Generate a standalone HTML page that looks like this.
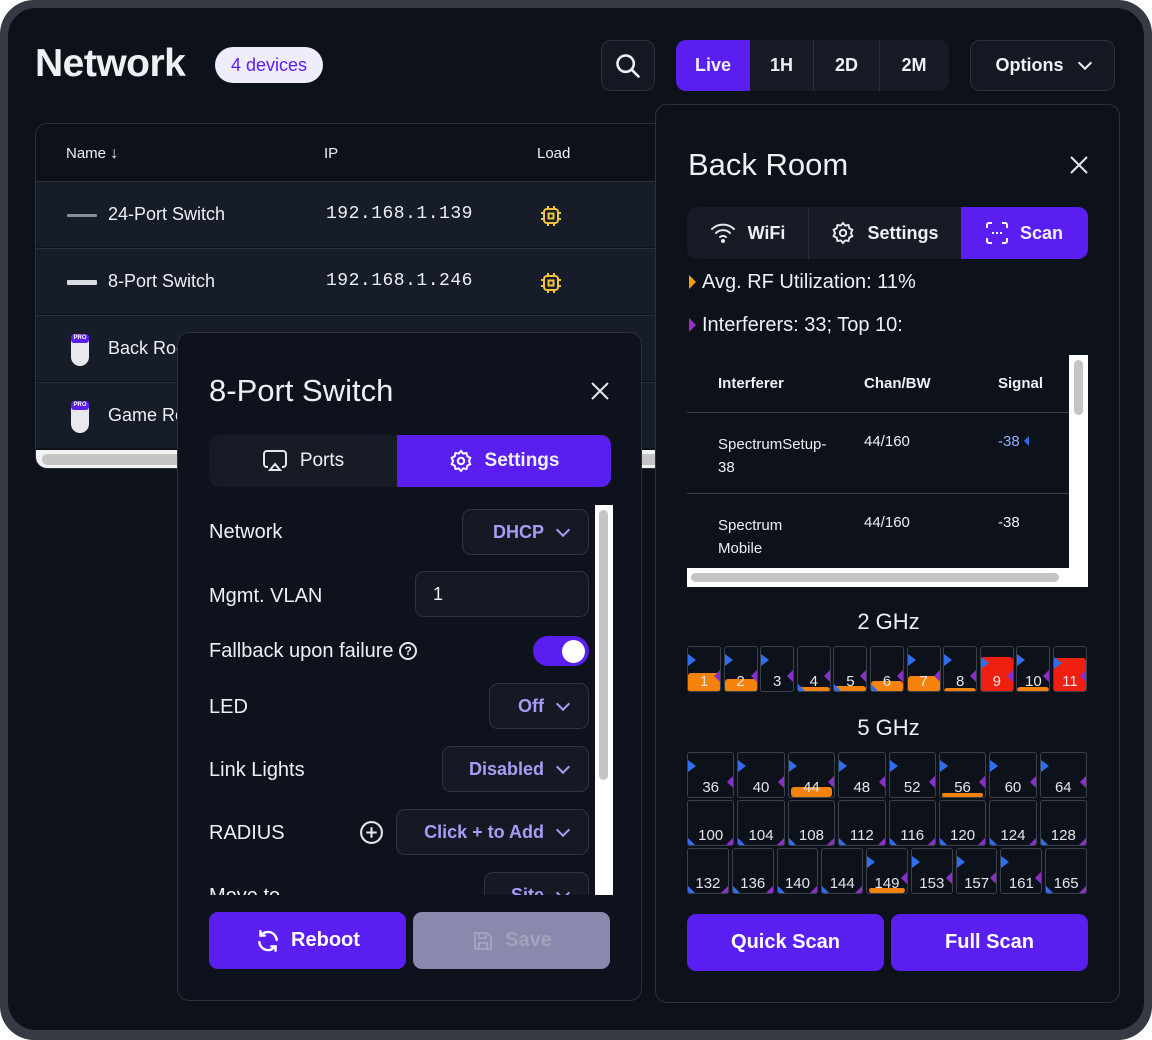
<!DOCTYPE html>
<html><head><meta charset="utf-8">
<style>
*{box-sizing:border-box;margin:0;padding:0}
body{width:1152px;height:1040px;background:#fff;font-family:"Liberation Sans",sans-serif;color:#eef0f4;position:relative;overflow:hidden}
.frame{position:absolute;left:0;top:0;width:1152px;height:1040px;border-radius:34px;background:#363a42}
.inner{position:absolute;left:8px;top:8px;width:1136px;height:1022px;border-radius:28px;background:#0d111a;overflow:hidden}
.a{position:absolute}
.btn{position:absolute;border:1px solid #2c313c;border-radius:10px;background:#131822;display:flex;align-items:center;justify-content:center;font-size:18px;color:#eef0f4}
.row{position:absolute;left:0;width:640px;height:66px;background:#161c28;border-top:1px solid #2a303b}
.row .nm{position:absolute;left:72px;top:22px;font-size:18px}
.row .ip{position:absolute;left:290px;top:22px;font-size:18px;font-family:"Liberation Mono",monospace;letter-spacing:0.5px}
.panel{position:absolute;background:#0e121c;border:1px solid #2c313c;border-radius:12px}
.lbl{position:absolute;left:31px;font-size:20px;color:#eef0f4}
.sel{position:absolute;border:1px solid #2e3440;border-radius:9px;background:#141924;color:#a99cf5;font-size:18px;font-weight:bold;display:flex;align-items:center;justify-content:flex-end;padding-right:20px;gap:14px}
.chev{width:10px;height:10px;border-right:2px solid #a99cf5;border-bottom:2px solid #a99cf5;transform:rotate(45deg);margin-top:-5px}
.grid{position:absolute;display:flex}
.c{position:relative;border:1px solid #3a404c;border-radius:3px;background:#0d111a;overflow:hidden;height:46px}
.c .f{position:absolute;left:0;right:0;bottom:0;border-radius:3px 3px 0 0}
.c .bt{position:absolute;left:0;top:7px;width:0;height:0;border-left:8px solid #2f6fee;border-top:6px solid transparent;border-bottom:6px solid transparent}
.c .bb{position:absolute;left:0;bottom:0;width:0;height:0;border-left:7px solid #2f6fee;border-top:7px solid transparent}
.c .pt{position:absolute;right:0;bottom:9px;width:0;height:0;border-right:6px solid #8b2fc9;border-top:6px solid transparent;border-bottom:6px solid transparent}
.c .pb{position:absolute;right:0;bottom:0;width:0;height:0;border-right:7px solid #8b2fc9;border-top:7px solid transparent}
.c .n{position:absolute;left:0;right:0;bottom:1px;text-align:center;font-size:15px;color:#e4e6ec}
.o{background:#f5820a}.r{background:#f02010}
.pbtn{position:absolute;background:#5a1ff0;border-radius:9px;display:flex;align-items:center;justify-content:center;font-size:20px;font-weight:bold;color:#fff;gap:10px}
</style></head><body>
<div class="frame"></div>
<div class="inner">
<!-- header -->
<div class="a" style="left:27px;top:34px;font-size:39px;font-weight:bold;letter-spacing:-0.5px">Network</div>
<div class="a" style="left:207px;top:39px;width:108px;height:36px;border-radius:18px;background:#efecfb;color:#5a1ff0;font-size:18px;display:flex;align-items:center;justify-content:center">4 devices</div>
<div class="btn" style="left:593px;top:32px;width:54px;height:51px"><svg width="28" height="28" viewBox="0 0 24 24" fill="none" stroke="#eef0f4" stroke-width="2.2" stroke-linecap="round"><circle cx="10" cy="10" r="7"/><path d="M15.5 15.5L21 21"/></svg></div>
<div class="a" style="left:668px;top:32px;width:273px;height:51px;border-radius:10px;background:#161b26;overflow:hidden;display:flex;font-size:18px;font-weight:bold">
<div style="width:74px;background:#5a1ff0;display:flex;align-items:center;justify-content:center">Live</div>
<div style="width:64px;border-right:1px solid #2a2f3a;display:flex;align-items:center;justify-content:center">1H</div>
<div style="width:66px;border-right:1px solid #2a2f3a;display:flex;align-items:center;justify-content:center">2D</div>
<div style="width:68px;display:flex;align-items:center;justify-content:center">2M</div>
</div>
<div class="btn" style="left:962px;top:32px;width:145px;height:51px;font-weight:bold;gap:16px">Options <div class="chev" style="border-color:#eef0f4"></div></div>

<!-- table card -->
<div class="a" style="left:27px;top:115px;width:660px;height:346px;border:1px solid #2a303b;border-radius:12px;background:#0d111a;overflow:hidden">
<div class="a" style="left:30px;top:21px;font-size:15px">Name <span style="font-size:16px">&#8595;</span></div>
<div class="a" style="left:288px;top:21px;font-size:15px">IP</div>
<div class="a" style="left:501px;top:21px;font-size:15px">Load</div>
<div class="row" style="top:57px"><div class="a" style="left:31px;top:32px;width:30px;height:3px;background:#8a8f98;border-radius:1px"></div><div class="nm">24-Port Switch</div><div class="ip">192.168.1.139</div>
<svg class="a" style="left:503px;top:22px" width="24" height="24" viewBox="0 0 24 24" fill="none" stroke="#f2c43d" stroke-width="2"><rect x="5" y="5" width="14" height="14" rx="3"/><rect x="9.5" y="9.5" width="5" height="5"/><path d="M9 2v3M15 2v3M9 19v3M15 19v3M2 9h3M2 15h3M19 9h3M19 15h3"/></svg></div>
<div class="row" style="top:124px"><div class="a" style="left:31px;top:31px;width:30px;height:5px;background:#d8dbe0;border-radius:1px"></div><div class="nm">8-Port Switch</div><div class="ip">192.168.1.246</div>
<svg class="a" style="left:503px;top:22px" width="24" height="24" viewBox="0 0 24 24" fill="none" stroke="#f2c43d" stroke-width="2"><rect x="5" y="5" width="14" height="14" rx="3"/><rect x="9.5" y="9.5" width="5" height="5"/><path d="M9 2v3M15 2v3M9 19v3M15 19v3M2 9h3M2 15h3M19 9h3M19 15h3"/></svg></div>
<div class="row" style="top:191px"><div class="a" style="left:35px;top:20px;width:18px;height:30px;background:#e8e9ee;border-radius:4px 4px 9px 9px"></div><div class="a" style="left:35px;top:18px;width:18px;height:9px;background:#5a1ff0;border-radius:3px;font-size:6px;color:#fff;text-align:center;line-height:9px;font-weight:bold">PRO</div><div class="nm">Back Room</div></div>
<div class="row" style="top:258px"><div class="a" style="left:35px;top:20px;width:18px;height:30px;background:#e8e9ee;border-radius:4px 4px 9px 9px"></div><div class="a" style="left:35px;top:18px;width:18px;height:9px;background:#5a1ff0;border-radius:3px;font-size:6px;color:#fff;text-align:center;line-height:9px;font-weight:bold">PRO</div><div class="nm">Game Room</div></div>
<div class="a" style="left:0;top:326px;width:660px;height:20px;background:#f2f2f2"><div class="a" style="left:6px;top:4px;width:640px;height:11px;border-radius:6px;background:#c4c4c4"></div></div>
</div>

<!-- left modal -->
<div class="panel" style="left:169px;top:324px;width:465px;height:669px">
<div class="a" style="left:31px;top:40px;font-size:31px">8-Port Switch</div>
<svg class="a" style="left:412px;top:48px" width="20" height="20" viewBox="0 0 20 20" stroke="#e4e6ec" stroke-width="2"><path d="M2 2L18 18M18 2L2 18"/></svg>
<div class="a" style="left:31px;top:102px;width:402px;height:52px;border-radius:10px;background:#161b26;overflow:hidden;display:flex;font-size:19px">
<div style="width:188px;display:flex;align-items:center;justify-content:center;gap:12px"><svg width="26" height="24" viewBox="0 0 26 24" fill="none" stroke="#e4e6ec" stroke-width="2"><path d="M6 18H5a3 3 0 0 1-3-3V5a3 3 0 0 1 3-3h16a3 3 0 0 1 3 3v10a3 3 0 0 1-3 3h-1"/><path d="M13 15l5 6H8z"/></svg>Ports</div>
<div style="flex:1;background:#5a1ff0;display:flex;align-items:center;justify-content:center;gap:12px;font-weight:bold"><svg width="24" height="24" viewBox="0 0 24 24" fill="none" stroke="#fff" stroke-width="2"><path d="M12 2l2.2 2.6 3.3-.6.8 3.3 3 1.5-1.3 3.2 1.3 3.2-3 1.5-.8 3.3-3.3-.6L12 22l-2.2-2.6-3.3.6-.8-3.3-3-1.5 1.3-3.2L2.7 8.8l3-1.5.8-3.3 3.3.6z"/><circle cx="12" cy="12" r="3.2"/></svg>Settings</div>
</div>
<div class="a" style="left:0;top:172px;width:440px;height:390px;overflow:hidden">
<div class="lbl" style="top:16px">Network</div>
<div class="sel" style="left:284px;top:4px;width:127px;height:46px">DHCP <div class="chev"></div></div>
<div class="lbl" style="top:80px">Mgmt. VLAN</div>
<div class="a" style="left:237px;top:66px;width:174px;height:46px;border:1px solid #2e3440;border-radius:9px;background:#141924;font-size:18px;padding:12px 0 0 17px">1</div>
<div class="lbl" style="top:135px">Fallback upon failure <span style="display:inline-block;width:18px;height:18px;border:2px solid #e4e6ec;border-radius:50%;font-size:12px;text-align:center;line-height:14px;font-weight:bold;vertical-align:2px">?</span></div>
<div class="a" style="left:355px;top:131px;width:56px;height:30px;border-radius:15px;background:#5a1ff0"><div class="a" style="left:29px;top:4px;width:23px;height:23px;border-radius:50%;background:#fff"></div></div>
<div class="lbl" style="top:191px">LED</div>
<div class="sel" style="left:311px;top:178px;width:100px;height:46px">Off <div class="chev"></div></div>
<div class="lbl" style="top:254px">Link Lights</div>
<div class="sel" style="left:264px;top:241px;width:147px;height:46px">Disabled <div class="chev"></div></div>
<div class="lbl" style="top:317px">RADIUS</div>
<svg class="a" style="left:181px;top:315px" width="25" height="25" viewBox="0 0 24 24" fill="none" stroke="#e4e6ec" stroke-width="2"><circle cx="12" cy="12" r="10"/><path d="M12 7v10M7 12h10"/></svg>
<div class="sel" style="left:218px;top:304px;width:193px;height:46px">Click + to Add <div class="chev"></div></div>
<div class="lbl" style="top:380px">Move to</div>
<div class="sel" style="left:306px;top:367px;width:105px;height:46px">Site <div class="chev"></div></div>
<div class="a" style="left:417px;top:0;width:18px;height:390px;background:#fff"><div class="a" style="left:4px;top:5px;width:9px;height:270px;border-radius:5px;background:#c4c4c4"></div></div>
</div>
<div class="pbtn" style="left:31px;top:579px;width:197px;height:57px"><svg width="26" height="26" viewBox="0 0 24 24" fill="none" stroke="#fff" stroke-width="2.2" stroke-linecap="round"><path d="M20 11a8 8 0 0 0-14.5-4M4 13a8 8 0 0 0 14.5 4"/><path d="M5 3v4h4M19 21v-4h-4"/></svg>Reboot</div>
<div class="pbtn" style="left:235px;top:579px;width:197px;height:57px;background:#8a88ac;color:#a3a2bd"><svg width="24" height="24" viewBox="0 0 24 24" fill="none" stroke="#a3a2bd" stroke-width="2"><path d="M4 4h12l4 4v12H4z"/><path d="M8 4v5h7V4M8 20v-6h8v6"/></svg>Save</div>
</div>

<!-- right panel -->
<div class="panel" style="left:647px;top:96px;width:465px;height:899px;background:#0d111a">
<div class="a" style="left:32px;top:42px;font-size:31px">Back Room</div>
<svg class="a" style="left:413px;top:50px" width="20" height="20" viewBox="0 0 20 20" stroke="#e4e6ec" stroke-width="2"><path d="M2 2L18 18M18 2L2 18"/></svg>
<div class="a" style="left:31px;top:102px;width:401px;height:52px;border-radius:10px;background:#161b26;overflow:hidden;display:flex;font-size:18px;font-weight:bold">
<div style="width:122px;border-right:1px solid #2a2f3a;display:flex;align-items:center;justify-content:center;gap:12px"><svg width="26" height="22" viewBox="0 0 26 22" fill="none" stroke="#e4e6ec" stroke-width="2" stroke-linecap="round"><path d="M2 7a16 16 0 0 1 22 0M6 11a10 10 0 0 1 14 0M10 15a4.5 4.5 0 0 1 6 0"/><circle cx="13" cy="19" r="1" fill="#e4e6ec"/></svg>WiFi</div>
<div style="width:152px;display:flex;align-items:center;justify-content:center;gap:12px"><svg width="24" height="24" viewBox="0 0 24 24" fill="none" stroke="#e4e6ec" stroke-width="2"><path d="M12 2l2.2 2.6 3.3-.6.8 3.3 3 1.5-1.3 3.2 1.3 3.2-3 1.5-.8 3.3-3.3-.6L12 22l-2.2-2.6-3.3.6-.8-3.3-3-1.5 1.3-3.2L2.7 8.8l3-1.5.8-3.3 3.3.6z"/><circle cx="12" cy="12" r="3.2"/></svg>Settings</div>
<div style="flex:1;background:#5a1ff0;display:flex;align-items:center;justify-content:center;gap:12px"><svg width="22" height="22" viewBox="0 0 22 22" fill="none" stroke="#fff" stroke-width="2"><path d="M1 6V3a2 2 0 0 1 2-2h3M16 1h3a2 2 0 0 1 2 2v3M21 16v3a2 2 0 0 1-2 2h-3M6 21H3a2 2 0 0 1-2-2v-3"/><path d="M6 11h10" stroke-dasharray="2 2"/></svg>Scan</div>
</div>
<div class="a" style="left:33px;top:170px;width:0;height:0;border-left:7px solid #f5a00a;border-top:7px solid transparent;border-bottom:7px solid transparent"></div>
<div class="a" style="left:46px;top:166px;font-size:20px">Avg. RF Utilization: 11%</div>
<div class="a" style="left:33px;top:213px;width:0;height:0;border-left:7px solid #9b2fc9;border-top:7px solid transparent;border-bottom:7px solid transparent"></div>
<div class="a" style="left:46px;top:209px;font-size:20px">Interferers: 33; Top 10:</div>
<div class="a" style="left:31px;top:250px;width:401px;height:232px;overflow:hidden;font-size:15px">
<div class="a" style="left:31px;top:20px;font-weight:bold">Interferer</div>
<div class="a" style="left:177px;top:20px;font-weight:bold">Chan/BW</div>
<div class="a" style="left:311px;top:20px;font-weight:bold">Signal</div>
<div class="a" style="left:0;top:57px;width:382px;height:1px;background:#3a404c"></div>
<div class="a" style="left:31px;top:78px;line-height:23px">SpectrumSetup-<br>38</div>
<div class="a" style="left:177px;top:78px">44/160</div>
<div class="a" style="left:311px;top:78px;color:#8fb0ff">-38 <span style="display:inline-block;width:0;height:0;border-right:5px solid #2f6fee;border-top:5px solid transparent;border-bottom:5px solid transparent"></span></div>
<div class="a" style="left:0;top:138px;width:382px;height:1px;background:#3a404c"></div>
<div class="a" style="left:31px;top:159px;line-height:23px">Spectrum<br>Mobile</div>
<div class="a" style="left:177px;top:159px">44/160</div>
<div class="a" style="left:311px;top:159px">-38</div>
<div class="a" style="left:382px;top:0;width:19px;height:232px;background:#fff"><div class="a" style="left:5px;top:5px;width:9px;height:55px;border-radius:5px;background:#c4c4c4"></div></div>
<div class="a" style="left:0;top:213px;width:382px;height:19px;background:#fff"><div class="a" style="left:4px;top:5px;width:368px;height:9px;border-radius:5px;background:#c4c4c4"></div></div>
</div>
<div class="a" style="left:0;top:504px;width:465px;text-align:center;font-size:22px">2 GHz</div>
<div class="grid" style="left:31px;top:541px;width:400px;gap:2.6px">
<div class="c" style="width:34px"><div class="f o" style="height:18px"></div><div class="bt"></div><div class="pt"></div><div class="n">1</div></div>
<div class="c" style="width:34px"><div class="f o" style="height:12px"></div><div class="bt"></div><div class="pt"></div><div class="n">2</div></div>
<div class="c" style="width:34px"><div class="bt"></div><div class="pt"></div><div class="n">3</div></div>
<div class="c" style="width:34px"><div class="f o" style="height:4px"></div><div class="bb"></div><div class="pt"></div><div class="n">4</div></div>
<div class="c" style="width:34px"><div class="f o" style="height:5px"></div><div class="bb"></div><div class="pt"></div><div class="n">5</div></div>
<div class="c" style="width:34px"><div class="f o" style="height:10px"></div><div class="bb"></div><div class="pt"></div><div class="n">6</div></div>
<div class="c" style="width:34px"><div class="f o" style="height:15px"></div><div class="bt"></div><div class="pt"></div><div class="n">7</div></div>
<div class="c" style="width:34px"><div class="f o" style="height:3px"></div><div class="bt"></div><div class="pt"></div><div class="n">8</div></div>
<div class="c" style="width:34px"><div class="f r" style="height:34px"></div><div class="bt" style="top:10px"></div><div class="pt"></div><div class="n">9</div></div>
<div class="c" style="width:34px"><div class="f o" style="height:4px"></div><div class="bt"></div><div class="pt"></div><div class="n">10</div></div>
<div class="c" style="width:34px"><div class="f r" style="height:33px"></div><div class="bt" style="top:10px"></div><div class="pt"></div><div class="n">11</div></div>
</div>
<div class="a" style="left:0;top:610px;width:465px;text-align:center;font-size:22px">5 GHz</div>
<div class="grid" style="left:31px;top:647px;width:400px;gap:3px">
<div class="c" style="width:47.4px"><div class="bt"></div><div class="pt"></div><div class="n">36</div></div>
<div class="c" style="width:47.4px"><div class="bt"></div><div class="pt"></div><div class="n">40</div></div>
<div class="c" style="width:47.4px"><div class="f o" style="height:10px;left:2px;right:2px;border-radius:3px"></div><div class="bt"></div><div class="pt"></div><div class="n">44</div></div>
<div class="c" style="width:47.4px"><div class="bt"></div><div class="pt"></div><div class="n">48</div></div>
<div class="c" style="width:47.4px"><div class="bt"></div><div class="pt"></div><div class="n">52</div></div>
<div class="c" style="width:47.4px"><div class="f o" style="height:4px;left:2px;right:2px;border-radius:3px"></div><div class="bt"></div><div class="pt"></div><div class="n">56</div></div>
<div class="c" style="width:47.4px"><div class="bt"></div><div class="pt"></div><div class="n">60</div></div>
<div class="c" style="width:47.4px"><div class="bt"></div><div class="pt"></div><div class="n">64</div></div>
</div>
<div class="grid" style="left:31px;top:695px;width:400px;gap:3px">
<div class="c" style="width:47.4px"><div class="bb"></div><div class="pb"></div><div class="n">100</div></div>
<div class="c" style="width:47.4px"><div class="bb"></div><div class="pb"></div><div class="n">104</div></div>
<div class="c" style="width:47.4px"><div class="bb"></div><div class="pb"></div><div class="n">108</div></div>
<div class="c" style="width:47.4px"><div class="bb"></div><div class="pb"></div><div class="n">112</div></div>
<div class="c" style="width:47.4px"><div class="bb"></div><div class="pb"></div><div class="n">116</div></div>
<div class="c" style="width:47.4px"><div class="bb"></div><div class="pb"></div><div class="n">120</div></div>
<div class="c" style="width:47.4px"><div class="bb"></div><div class="pb"></div><div class="n">124</div></div>
<div class="c" style="width:47.4px"><div class="bb"></div><div class="pb"></div><div class="n">128</div></div>
</div>
<div class="grid" style="left:31px;top:743px;width:400px;gap:3px">
<div class="c" style="width:41.8px"><div class="bb"></div><div class="pb"></div><div class="n">132</div></div>
<div class="c" style="width:41.8px"><div class="bb"></div><div class="pb"></div><div class="n">136</div></div>
<div class="c" style="width:41.8px"><div class="bb"></div><div class="pb"></div><div class="n">140</div></div>
<div class="c" style="width:41.8px"><div class="bb"></div><div class="pb"></div><div class="n">144</div></div>
<div class="c" style="width:41.8px"><div class="f o" style="height:5px;left:2px;right:2px;border-radius:3px"></div><div class="bt"></div><div class="pt"></div><div class="n">149</div></div>
<div class="c" style="width:41.8px"><div class="bt"></div><div class="pt"></div><div class="n">153</div></div>
<div class="c" style="width:41.8px"><div class="bt"></div><div class="pt"></div><div class="n">157</div></div>
<div class="c" style="width:41.8px"><div class="bt"></div><div class="pt"></div><div class="n">161</div></div>
<div class="c" style="width:41.8px"><div class="bb"></div><div class="pb"></div><div class="n">165</div></div>
</div>
<div class="pbtn" style="left:31px;top:809px;width:197px;height:57px">Quick Scan</div>
<div class="pbtn" style="left:235px;top:809px;width:197px;height:57px">Full Scan</div>
</div>
</div>
</body></html>
